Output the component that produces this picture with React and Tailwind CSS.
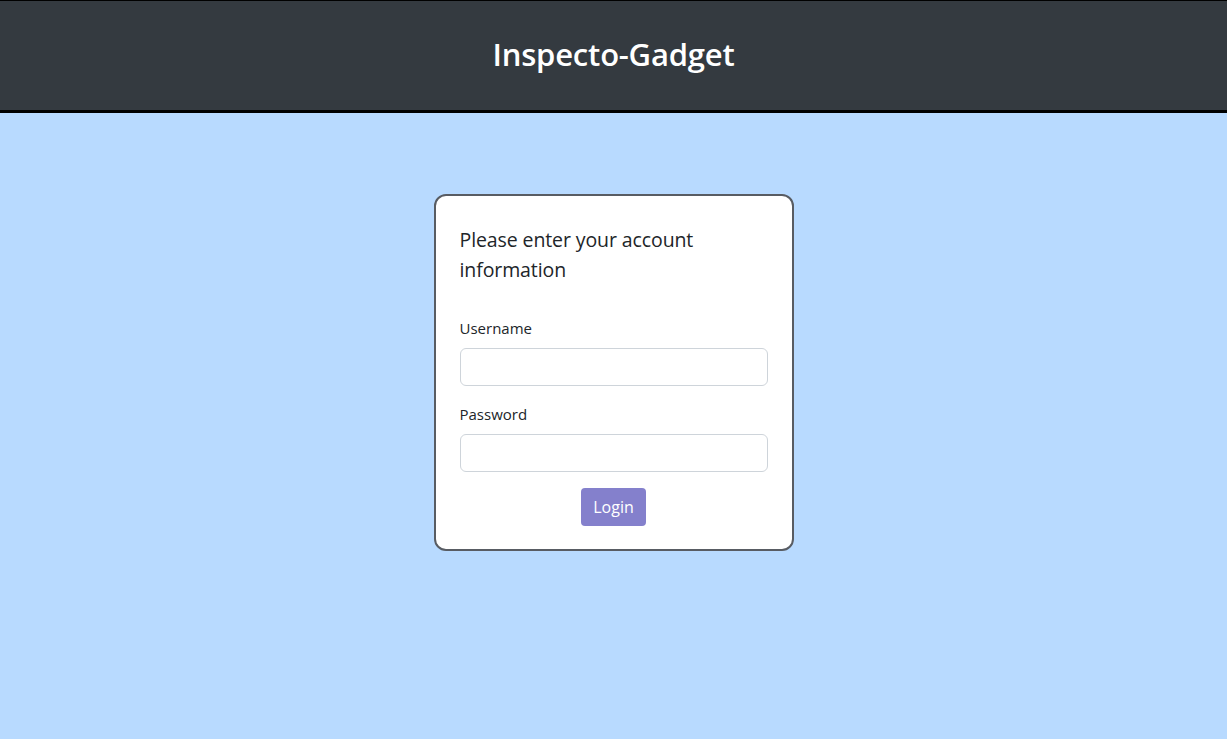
export default function App() {
  return (
    <div className="min-h-[739px] bg-[#b8daff] font-['Open_Sans',sans-serif] text-[#212529]">
      <header className="flex h-[113px] items-center justify-center border-t border-b-[3px] border-black bg-[#343a40] pb-[3px]">
        <h1 className="text-[31px] font-semibold tracking-[-0.2px] text-white">Inspecto-Gadget</h1>
      </header>
      <main className="flex justify-center pt-[81px]">
        <form className="w-[360px] rounded-xl border-2 border-[#585c63] bg-white px-6 pt-[29px] pb-[23px]">
          <h5 className="text-[19.5px] leading-[30px] font-medium tracking-[-0.1px]">
            Please enter your account information
          </h5>
          <label className="mt-[31px] block text-[15px] leading-6 font-medium" htmlFor="username">
            Username
          </label>
          <input
            id="username"
            type="text"
            className="mt-2 block h-[38px] w-full rounded-md border border-[#ced4da] px-3"
          />
          <label className="mt-4 block text-[15px] leading-6 font-medium" htmlFor="password">
            Password
          </label>
          <input
            id="password"
            type="password"
            className="mt-2 block h-[38px] w-full rounded-md border border-[#ced4da] px-3"
          />
          <div className="mt-4 flex justify-center">
            <button type="button" className="h-[38px] rounded bg-[#8480cc] px-3 text-[16px] text-white">
              Login
            </button>
          </div>
        </form>
      </main>
    </div>
  );
}
